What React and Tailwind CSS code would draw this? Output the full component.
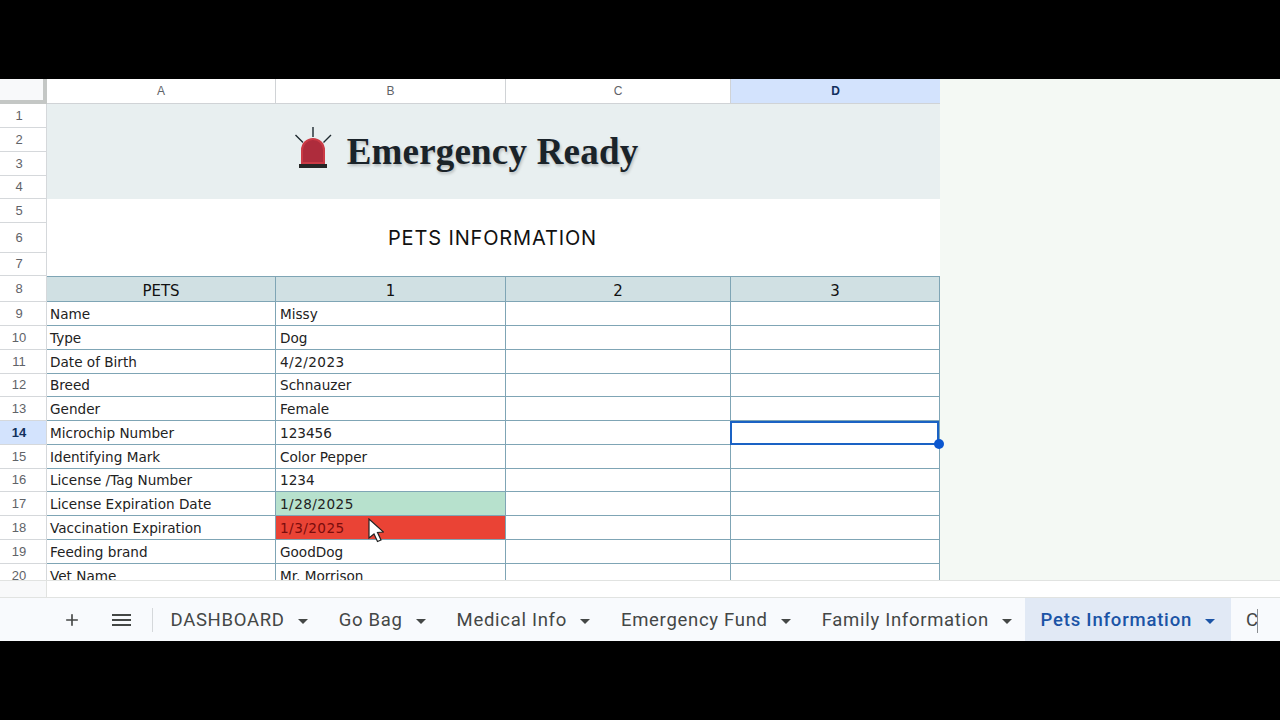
import React from "react";
import { Plus } from "lucide-react";

const rowHeights = [24, 24, 24, 23, 24, 30, 23, 26, 24, 24, 24, 23, 24, 24, 24, 23, 24, 24, 24, 24];
const cols = "grid-cols-[229px_230px_225px_209px]";

const rows = [
  ["Name", "Missy"],
  ["Type", "Dog"],
  ["Date of Birth", "4/2/2023"],
  ["Breed", "Schnauzer"],
  ["Gender", "Female"],
  ["Microchip Number", "123456"],
  ["Identifying Mark", "Color Pepper"],
  ["License /Tag Number", "1234"],
  ["License Expiration Date", "1/28/2025"],
  ["Vaccination Expiration", "1/3/2025"],
  ["Feeding brand", "GoodDog"],
  ["Vet Name", "Mr. Morrison"],
];

const tabs = ["DASHBOARD", "Go Bag", "Medical Info", "Emergency Fund", "Family Information"];

const RowNum = ({ n, h }) => (
  <div
    className={`flex items-center justify-center pr-[8px] border-r border-b border-[#d5d8db] text-[13px] ${
      n === 14 ? "bg-[#d3e3fd] font-bold text-[#12305c]" : "bg-white text-[#5f6368]"
    }`}
    style={{ height: h }}
  >
    {n}
  </div>
);

const Caret = ({ color = "#444746" }) => (
  <svg width="10" height="5" viewBox="0 0 10 5" className="ml-[13px] mt-[1px]">
    <path d="M0 0h10L5 5z" fill={color} />
  </svg>
);

const Siren = () => (
  <svg width="40" height="44" viewBox="0 0 40 44" className="mr-[14px] -mt-[7px]">
    <path d="M20 1v10M2.500 9l7.500 7.500M38 9l-7.500 7.500" stroke="#1f2a30" strokeWidth="1.4" />
    <path d="M8 38V24a12 12 0 0 1 24 0v14z" fill="#cb3a45" />
    <path d="M10 36V24a10 10 0 0 1 20 0v12z" fill="#ae2c3c" />
    <path d="M6 38h28v4H6z" fill="#262626" />
  </svg>
);

export default function App() {
  return (
    <div className="w-[1280px] h-[720px] overflow-hidden bg-black flex flex-col font-['Liberation_Sans',sans-serif]">
      <div className="h-[79px] shrink-0" />
      <div className="h-[501px] shrink-0 flex bg-[#f4f9f4] overflow-hidden">
        <div className="w-[940px] shrink-0 relative">
          <div className="flex h-[25px]">
            <div className="w-[47px] bg-[#f8f9fa] border-r-4 border-b-4 border-[#c4c7c5]" />
            <div className={`grid ${cols} flex-1`}>
              {["A", "B", "C"].map((c) => (
                <div
                  key={c}
                  className="flex items-center justify-center bg-white border-r border-b border-[#d0d3d6] text-[12px] text-[#5f6368]"
                >
                  {c}
                </div>
              ))}
              <div className="flex items-center justify-center bg-[#d3e3fd] border-b border-[#d0d3d6] text-[12px] font-bold text-[#12305c]">
                D
              </div>
            </div>
          </div>

          <div className="flex">
            <div className="w-[47px] shrink-0">
              {rowHeights.map((h, i) => (
                <RowNum key={i} n={i + 1} h={h} />
              ))}
            </div>
            <div className="w-[893px] shrink-0">
              <div className="h-[95px] bg-[#e8eff0] flex items-center justify-center pr-[56px]">
                <Siren />
                <span className="font-['Liberation_Serif',serif] font-bold text-[37px] leading-none text-[#1a2329] tracking-[0.2px] [text-shadow:1px_2px_3px_rgba(0,0,0,0.22)]">
                  Emergency Ready
                </span>
              </div>
              <div className="h-[77px] bg-white flex items-center justify-center pt-[1px] pr-[2px]">
                <span className="font-['Inter',sans-serif] text-[20px] tracking-[0.85px] text-[#111]">PETS INFORMATION</span>
              </div>
              <div className={`grid ${cols} h-[26px] bg-[#d0e0e3] border-t border-b border-[#7fa5b5] text-[15px] text-[#111] font-['DejaVu_Sans',sans-serif]`}>
                {["PETS", "1", "2", "3"].map((t) => (
                  <div key={t} className="flex items-center justify-center pt-[3px] border-r border-[#7fa5b5]">
                    {t}
                  </div>
                ))}
              </div>
              {rows.map(([label, value], i) => {
                const bg = i === 8 ? "bg-[#b7e1cd]" : i === 9 ? "bg-[#ea4335] text-[#7a0c0c]" : "bg-white text-[#222]";
                const spacing = value.includes("/") ? "tracking-[0.45px]" : "";
                return (
                  <div
                    key={label}
                    className={`grid ${cols} bg-white border-b border-[#7fa5b5] text-[13.6px] text-[#222] font-['DejaVu_Sans',sans-serif]`}
                    style={{ height: rowHeights[i + 8] }}
                  >
                    <div className="flex items-center pl-[3px] pt-[1px] border-r border-[#7fa5b5] whitespace-nowrap">{label}</div>
                    <div className={`flex items-center pl-[4px] pt-[1px] border-r border-[#7fa5b5] whitespace-nowrap ${spacing} ${bg}`}>{value}</div>
                    <div className="border-r border-[#7fa5b5]" />
                    <div className="border-r border-[#7fa5b5]" />
                  </div>
                );
              })}
            </div>
          </div>

          {/* selected cell D14 */}
          <div className="absolute left-[730px] top-[342px] w-[209px] h-[24px] border-2 border-[#1a62c4]" />
          <div className="absolute left-[934px] top-[360px] w-[10px] h-[10px] rounded-full bg-[#0b57d0]" />

          {/* mouse pointer */}
          <svg width="17" height="25" viewBox="0 0 17 25" className="absolute left-[367px] top-[439px]">
            <path d="M2 1v19l5-4 3.500 7.500 3.500-1.500-3.500-7.500 6-.5z" fill="#fff" stroke="#222" strokeWidth="1.2" />
          </svg>
        </div>
      </div>

      <div className="h-[17px] shrink-0 bg-white border-t border-[#e1e3e1] flex">
        <div className="w-[47px] bg-[#f8f9fa] border-r border-[#e1e3e1]" />
      </div>

      <div className="h-[44px] shrink-0 bg-[#f8fafd] border-t border-[#e1e3e1] flex items-center font-['Roboto',sans-serif] text-[18.5px] text-[#444746] tracking-[0.7px] overflow-hidden">
        <div className="w-[152px] shrink-0 h-full flex items-center pl-[63px] gap-[31px]">
          <Plus size={18} strokeWidth={2.2} />
          <svg width="19" height="12" viewBox="0 0 19 12">
            <path d="M0 1h19M0 6h19M0 11h19" stroke="#444746" strokeWidth="2" />
          </svg>
        </div>
        <div className="w-px h-[24px] bg-[#d5d8db] shrink-0" />
        {tabs.map((t) => (
          <div key={t} className="flex items-center h-full pt-[2px] pl-[17.500px] pr-[13.500px] whitespace-nowrap">
            {t}
            <Caret />
          </div>
        ))}
        <div className="flex items-center h-full pt-[2px] bg-[#e1e9f5] text-[#1b54a6] font-medium tracking-[0.8px] pl-[15px] pr-[16px] whitespace-nowrap">
          Pets Information
          <Caret color="#1b54a6" />
        </div>
        <div className="flex items-center h-[24px] mt-[2px] ml-[15px] w-[12px] overflow-hidden border-r border-[#8a8d90]">C</div>
      </div>
      <div className="flex-1" />
    </div>
  );
}
